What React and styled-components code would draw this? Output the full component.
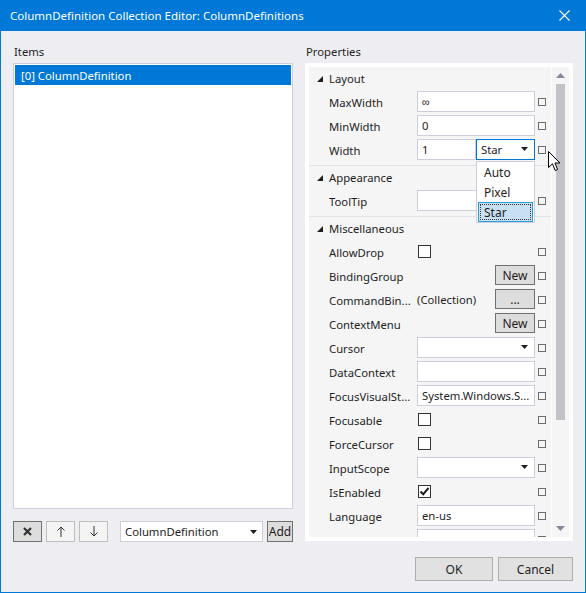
import React from "react";
import styled, { createGlobalStyle } from "styled-components";

const GlobalStyle = createGlobalStyle`
  html, body {
    margin: 0;
    padding: 0;
    background: #ffffff;
  }
  body {
    font-family: "Noto Sans", "Liberation Sans", sans-serif;
    font-size: 11.3px;
    color: #1e1e1e;
  }
  * {
    box-sizing: border-box;
  }
`;

const Window = styled.div`
  position: relative;
  width: 586px;
  height: 593px;
  display: flex;
  flex-direction: column;
  background: #eeeef2;
  border: 1px solid #0078d7;
  border-top: none;
  overflow: hidden;
`;

const TitleBar = styled.div`
  height: 31px;
  flex: none;
  display: flex;
  align-items: center;
  justify-content: space-between;
  padding: 0 8px 0 9px;
  background: #0078d7;
  color: #ffffff;
  font-size: 11.5px;
`;

const CloseBox = styled.div`
  width: 26px;
  height: 26px;
  display: flex;
  align-items: center;
  justify-content: center;
`;

const Body = styled.div`
  flex: 1;
  display: flex;
  flex-direction: column;
  padding: 12px 12px 11px 12px;
`;

const Main = styled.div`
  display: grid;
  grid-template-columns: 280px 268px;
  grid-template-rows: 20px 479px;
  column-gap: 12px;
`;

const Caption = styled.div`
  line-height: 18px;
  padding-left: 1px;
`;

const LeftColumn = styled.div`
  display: flex;
  flex-direction: column;
`;

const ItemList = styled.div`
  flex: 1;
  background: #ffffff;
  border: 1px solid #cccedb;
  padding: 1px;
`;

const ListItem = styled.div`
  height: 20px;
  display: flex;
  align-items: center;
  padding-left: 6px;
  background: ${({ selected }) => (selected ? "#0078d7" : "transparent")};
  color: ${({ selected }) => (selected ? "#ffffff" : "#1e1e1e")};
`;

const Toolbar = styled.div`
  margin-top: 12px;
  height: 21px;
  display: flex;
  gap: 4px;
`;

const ToolButton = styled.div`
  width: ${({ w }) => w || 29}px;
  height: 21px;
  display: flex;
  align-items: center;
  justify-content: center;
  background: ${({ disabled }) => (disabled ? "#f4f4f4" : "#dddddd")};
  border: 1px solid ${({ disabled }) => (disabled ? "#bfbfbf" : "#707070")};
  color: #1e1e1e;
  font-size: 12px;
`;

const TypeCombo = styled.div`
  width: 143px;
  height: 21px;
  margin-left: 8px;
  display: flex;
  align-items: center;
  justify-content: space-between;
  padding: 0 5px 0 4px;
  background: #ffffff;
  border: 1px solid #cccedb;
`;

const Panel = styled.div`
  display: flex;
  background: #ffffff;
  padding: 4px;
  height: 478px;
`;

const Grid = styled.div`
  position: relative;
  flex: 1;
  background: #f5f5f5;
  overflow: hidden;
`;

const Scrollbar = styled.div`
  width: 17px;
  margin-left: 1px;
  display: flex;
  flex-direction: column;
  background: #f5f5f5;
`;

const ScrollArrow = styled.div`
  height: 17px;
  flex: none;
  display: flex;
  align-items: center;
  justify-content: center;
`;

const ScrollTrack = styled.div`
  flex: 1;
  padding: 0 4px;
`;

const Thumb = styled.div`
  height: 336px;
  background: #c2c3c9;
`;

const Category = styled.div`
  border-top: ${({ first }) => (first ? "none" : "1px solid #e2e2e6")};
  padding-bottom: 3px;
`;

const CategoryHeader = styled.div`
  height: 23px;
  display: flex;
  align-items: center;
  padding-left: 8px;
  gap: 6px;
`;

const Row = styled.div`
  height: 24px;
  display: grid;
  grid-template-columns: 85px 118px 8px;
  column-gap: 3px;
  align-items: center;
  padding-left: 20px;
`;

const Label = styled.div`
  white-space: nowrap;
  overflow: hidden;
`;

const ValueCell = styled.div`
  display: flex;
  align-items: center;
  justify-content: ${({ spread }) => (spread ? "space-between" : "flex-start")};
  height: 24px;
  padding-bottom: 2px;
`;

const TextBox = styled.div`
  flex: ${({ w }) => (w ? "none" : "1")};
  width: ${({ w }) => (w ? `${w}px` : "auto")};
  height: 21px;
  display: flex;
  align-items: center;
  justify-content: space-between;
  padding: 0 6px 0 4px;
  background: #ffffff;
  border: 1px solid ${({ focused }) => (focused ? "#0078d7" : "#cccedb")};
  white-space: nowrap;
  overflow: hidden;
`;

const CheckBox = styled.div`
  width: 13px;
  height: 13px;
  margin-left: 1px;
  display: flex;
  align-items: center;
  justify-content: center;
  background: #ffffff;
  border: 1px solid #333333;
`;

const GridButton = styled.div`
  width: 40px;
  height: 20px;
  display: flex;
  align-items: center;
  justify-content: center;
  background: #dddddd;
  border: 1px solid #707070;
  font-size: 12px;
`;

const Marker = styled.div`
  width: 8px;
  height: 8px;
  border: 1px solid #6d6d6d;
  margin-bottom: 1px;
`;

const Popup = styled.div`
  position: absolute;
  left: 167px;
  top: 94px;
  width: 59px;
  background: #ffffff;
  border: 1px solid #cccedb;
`;

const PopupItem = styled.div`
  height: 20px;
  display: flex;
  align-items: center;
  padding-left: 5px;
  margin: 0 1px;
  background: ${({ selected }) => (selected ? "#c9e0f2" : "transparent")};
  border: 1px solid ${({ selected }) => (selected ? "#26a0da" : "transparent")};
  outline: ${({ selected }) => (selected ? "1px dotted #333333" : "none")};
  outline-offset: -3px;
  font-size: 12px;
`;

const Footer = styled.div`
  margin-top: 15px;
  display: flex;
  justify-content: flex-end;
  gap: 5px;
`;

const DialogButton = styled.div`
  width: ${({ w }) => w}px;
  height: 24px;
  display: flex;
  align-items: center;
  justify-content: center;
  background: #e1e1e1;
  border: 1px solid #adadad;
  font-size: 12px;
`;

const Pointer = styled.svg`
  position: absolute;
  left: 547px;
  top: 151px;
`;

const DropArrow = () => (
  <svg width="7" height="4" viewBox="0 0 7 4">
    <polygon points="0,0 7,0 3.5,4" fill="#1e1e1e" />
  </svg>
);

const Expander = () => (
  <svg width="6" height="6" viewBox="0 0 6 6">
    <polygon points="6,0 6,6 0,6" fill="#1e1e1e" />
  </svg>
);

const Check = () => (
  <svg width="11" height="11" viewBox="0 0 11 11">
    <polyline points="1.5,5.5 4.2,8.3 9.5,2" fill="none" stroke="#1e1e1e" strokeWidth="2" />
  </svg>
);

const categories = [
  {
    name: "Layout",
    rows: [
      { label: "MaxWidth", kind: "text", value: "∞" },
      { label: "MinWidth", kind: "text", value: "0" },
      { label: "Width", kind: "width" },
    ],
  },
  {
    name: "Appearance",
    rows: [{ label: "ToolTip", kind: "text", value: "" }],
  },
  {
    name: "Miscellaneous",
    rows: [
      { label: "AllowDrop", kind: "check" },
      { label: "BindingGroup", kind: "button", value: "New" },
      { label: "CommandBin...", kind: "collection" },
      { label: "ContextMenu", kind: "button", value: "New" },
      { label: "Cursor", kind: "combo" },
      { label: "DataContext", kind: "text", value: "" },
      { label: "FocusVisualSt...", kind: "text", value: "System.Windows.S..." },
      { label: "Focusable", kind: "check" },
      { label: "ForceCursor", kind: "check" },
      { label: "InputScope", kind: "combo" },
      { label: "IsEnabled", kind: "check", checked: true },
      { label: "Language", kind: "text", value: "en-us" },
      { label: "Name", kind: "text", value: "" },
    ],
  },
];

function Editor({ row }) {
  switch (row.kind) {
    case "width":
      return (
        <ValueCell>
          <TextBox w={59}>1</TextBox>
          <TextBox focused>
            Star
            <DropArrow />
          </TextBox>
        </ValueCell>
      );
    case "check":
      return (
        <ValueCell>
          <CheckBox>{row.checked && <Check />}</CheckBox>
        </ValueCell>
      );
    case "button":
      return (
        <ValueCell spread>
          <span />
          <GridButton>{row.value}</GridButton>
        </ValueCell>
      );
    case "collection":
      return (
        <ValueCell spread>
          <span>(Collection)</span>
          <GridButton>...</GridButton>
        </ValueCell>
      );
    case "combo":
      return (
        <ValueCell>
          <TextBox>
            <span />
            <DropArrow />
          </TextBox>
        </ValueCell>
      );
    default:
      return (
        <ValueCell>
          <TextBox>{row.value}</TextBox>
        </ValueCell>
      );
  }
}

export default function App() {
  return (
    <>
      <GlobalStyle />
      <Window>
        <TitleBar>
          <span>ColumnDefinition Collection Editor: ColumnDefinitions</span>
          <CloseBox>
            <svg width="11" height="11" viewBox="0 0 11 11">
              <path d="M0.5 0.5 L10.5 10.5 M10.5 0.5 L0.5 10.5" stroke="#ffffff" strokeWidth="1.1" />
            </svg>
          </CloseBox>
        </TitleBar>

        <Body>
          <Main>
            <Caption>Items</Caption>
            <Caption>Properties</Caption>

            <LeftColumn>
              <ItemList>
                <ListItem selected>[0] ColumnDefinition</ListItem>
              </ItemList>
              <Toolbar>
                <ToolButton>
                  <svg width="9" height="9" viewBox="0 0 9 9">
                    <path d="M1 1 L8 8 M8 1 L1 8" stroke="#333333" strokeWidth="2.2" />
                  </svg>
                </ToolButton>
                <ToolButton disabled>
                  <svg width="8" height="11" viewBox="0 0 8 11">
                    <path d="M4 1 V11 M0.5 4.5 L4 1 L7.5 4.5" fill="none" stroke="#333333" strokeWidth="1" />
                  </svg>
                </ToolButton>
                <ToolButton disabled>
                  <svg width="8" height="11" viewBox="0 0 8 11">
                    <path d="M4 0 V10 M0.5 6.5 L4 10 L7.5 6.5" fill="none" stroke="#333333" strokeWidth="1" />
                  </svg>
                </ToolButton>
                <TypeCombo>
                  ColumnDefinition
                  <DropArrow />
                </TypeCombo>
                <ToolButton w={26}>Add</ToolButton>
              </Toolbar>
            </LeftColumn>

            <Panel>
              <Grid>
                {categories.map((cat, i) => (
                  <Category key={cat.name} first={i === 0}>
                    <CategoryHeader>
                      <Expander />
                      {cat.name}
                    </CategoryHeader>
                    {cat.rows.map((row) => (
                      <Row key={row.label}>
                        <Label>{row.label}</Label>
                        <Editor row={row} />
                        <Marker />
                      </Row>
                    ))}
                  </Category>
                ))}
                <Popup>
                  <PopupItem>Auto</PopupItem>
                  <PopupItem>Pixel</PopupItem>
                  <PopupItem selected>Star</PopupItem>
                </Popup>
              </Grid>
              <Scrollbar>
                <ScrollArrow>
                  <svg width="9" height="5" viewBox="0 0 9 5">
                    <polygon points="0,5 9,5 4.5,0" fill="#868999" />
                  </svg>
                </ScrollArrow>
                <ScrollTrack>
                  <Thumb />
                </ScrollTrack>
                <ScrollArrow>
                  <svg width="9" height="5" viewBox="0 0 9 5">
                    <polygon points="0,0 9,0 4.5,5" fill="#868999" />
                  </svg>
                </ScrollArrow>
              </Scrollbar>
            </Panel>
          </Main>

          <Footer>
            <DialogButton w={78}>OK</DialogButton>
            <DialogButton w={75}>Cancel</DialogButton>
          </Footer>
        </Body>

        <Pointer width="13" height="21" viewBox="0 0 13 21">
          <path
            d="M0.5 0.5 L0.5 16.5 L4.5 12.8 L7.2 19.5 L9.6 18.5 L7 12 L12 12 Z"
            fill="#ffffff"
            stroke="#000000"
            strokeWidth="1"
            strokeLinejoin="miter"
          />
        </Pointer>
      </Window>
    </>
  );
}
